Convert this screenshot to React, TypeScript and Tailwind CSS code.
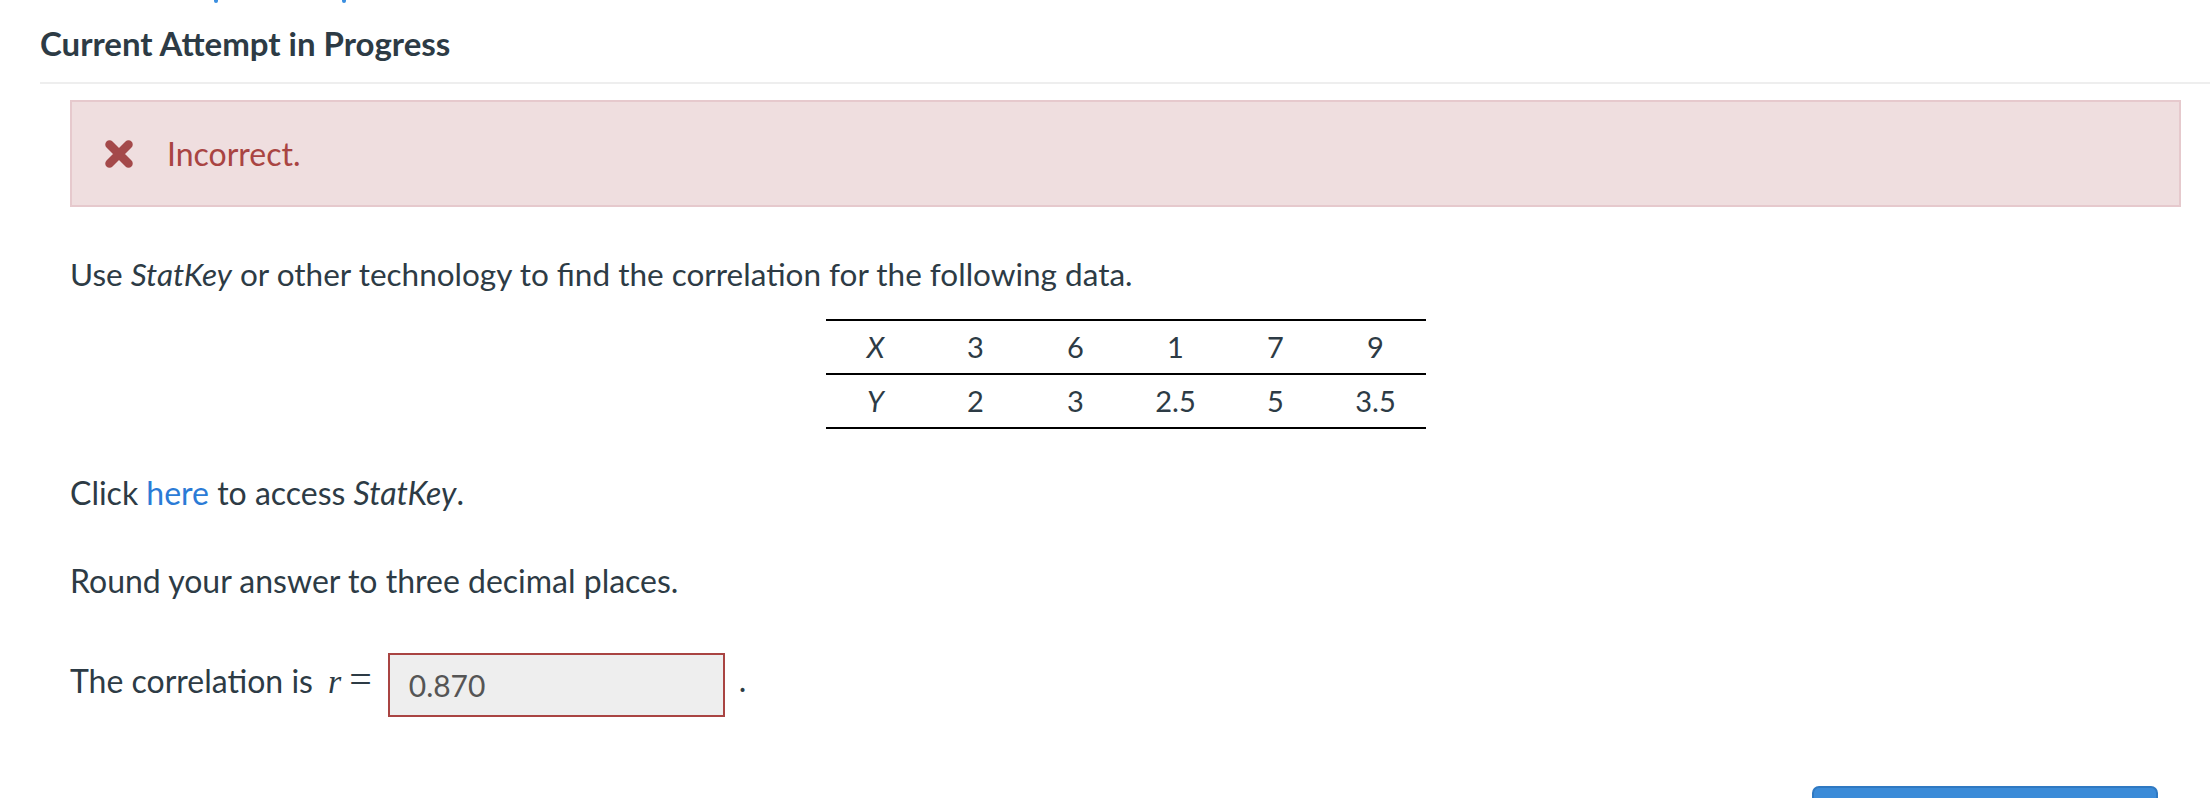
export default function App() {
  const xs = ['3', '6', '1', '7', '9'];
  const ys = ['2', '3', '2.5', '5', '3.5'];

  return (
    <div className="min-h-screen w-full bg-white font-[Lato,sans-serif] text-[#2d3b45]">
      {/* clipped link row above the heading */}
      <div className="flex h-[3px]">
        <span className="ml-[214px] h-[3px] w-[4px] rounded-b-sm bg-[#3b8fe0]" />
        <span className="ml-[124px] h-[3px] w-[4px] rounded-b-sm bg-[#3b8fe0]" />
      </div>

      <h2 className="mt-[22px] pl-[40px] text-[33px] font-bold leading-[36px]">
        Current Attempt in Progress
      </h2>
      <div className="ml-[40px] mt-[21px] h-[2px] bg-[#eeeeee]" />

      <div className="ml-[70px] mr-[29px] mt-[16px]">
        {/* feedback banner */}
        <div className="flex h-[107px] items-center border-2 border-[#e6c9cd] bg-[#efdedf] pl-[31px] text-[#a94442]">
          <svg width="32" height="32" viewBox="0 0 32 32" className="shrink-0">
            <path d="M6.5 6.5 L25.5 25.5 M25.5 6.5 L6.5 25.5" stroke="#a4494a" strokeWidth="8.5" strokeLinecap="round" />
          </svg>
          <span className="ml-[32px] text-[32px] leading-[36px]">Incorrect.</span>
        </div>

        <p className="mt-[49px] text-[31.5px] leading-[36px]">
          Use <i>StatKey</i> or other technology to find the correlation for the following data.
        </p>

        {/* data table */}
        <div className="mt-[27px] flex justify-center">
          <table className="border-collapse text-[29px] leading-[52px]">
            <tbody>
              <tr className="border-y-2 border-black">
                <td className="w-[100px] text-center italic">X</td>
                {xs.map((v, i) => (
                  <td key={i} className="w-[100px] text-center">{v}</td>
                ))}
              </tr>
              <tr className="border-b-2 border-black">
                <td className="w-[100px] text-center italic">Y</td>
                {ys.map((v, i) => (
                  <td key={i} className="w-[100px] text-center">{v}</td>
                ))}
              </tr>
            </tbody>
          </table>
        </div>

        <p className="mt-[46px] text-[32px] leading-[36px]">
          Click <a className="text-[#2b7bd6]">here</a> to access <i>StatKey</i>.
        </p>

        <p className="mt-[52px] text-[32px] leading-[36px]">Round your answer to three decimal places.</p>

        <div className="mt-[54px] flex items-start">
          <span className="mt-[9px] flex items-baseline text-[32px] leading-[36px]">
            The correlation is
            <span className="ml-[15px] font-['Liberation_Serif',serif] text-[34px] italic">r</span>
            <span className="ml-[8px] mr-[16px] font-['Liberation_Serif',serif] text-[40px] leading-[36px]">=</span>
          </span>
          <div className="flex h-[64px] w-[337px] shrink-0 items-center border-2 border-[#a94442] bg-[#eeeeee] pl-[19px] text-[30px] text-[#555555]">
            0.870
          </div>
          <span className="ml-[14px] mt-[9px] text-[32px] leading-[36px]">.</span>
        </div>

        <div className="mt-[69px] flex justify-end pr-[23px]">
          <button
            aria-label="Submit Answer"
            className="h-[60px] w-[346px] rounded-[7px] border-2 border-[#2f79c2] bg-[#3b8bd8]"
          />
        </div>
      </div>
    </div>
  );
}
